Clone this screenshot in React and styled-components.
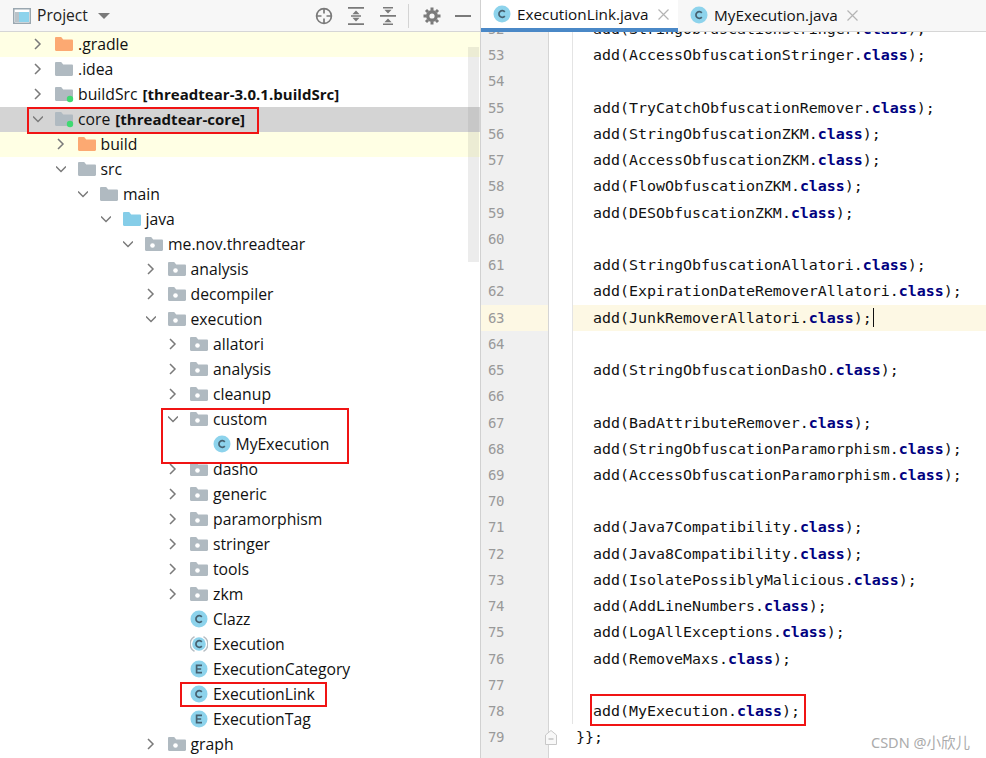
import React from 'react'
import styled, { createGlobalStyle } from 'styled-components'

const Global = createGlobalStyle`
  html, body { margin: 0; padding: 0; background: #fff; }
  #root { width: 986px; height: 758px; overflow: hidden; }
`

const Page = styled.div`
  position: relative;
  width: 986px;
  height: 758px;
  overflow: hidden;
  display: grid;
  grid-template-columns: 481px 505px;
  font-family: "Open Sans", "Noto Sans", sans-serif;
  color: #111;
`

const Side = styled.div`
  position: relative;
  height: 758px;
  overflow: hidden;
  border-right: 1px solid #d1d1d1;
  box-sizing: border-box;
`

const Header = styled.div`
  height: 32px;
  box-sizing: border-box;
  display: flex;
  align-items: center;
  padding-left: 13px;
  background: #f7f7f7;
  border-bottom: 1px solid #d6d6d6;
`

const Title = styled.span`
  font-size: 15.6px;
  margin-left: 6px;
  margin-bottom: 1px;
  color: #222;
`

const Caret = styled.span`
  width: 0;
  height: 0;
  margin-left: 10px;
  border-left: 6px solid transparent;
  border-right: 6px solid transparent;
  border-top: 6px solid #7a7a7a;
`

const Tools = styled.div`
  margin-left: auto;
  display: flex;
  align-items: center;
  height: 100%;
  padding-right: 4px;
`

const ToolButton = styled.span`
  display: flex;
  width: ${p => p.$w || 32}px;
  justify-content: center;
  color: #7a7a7a;
`

const ToolDivider = styled.span`
  width: 1px;
  height: 24px;
  background: #d4d4d4;
  margin: 0 5px 0 4px;
`

const Row = styled.div`
  height: 25px;
  display: flex;
  align-items: center;
  box-sizing: border-box;
  white-space: nowrap;
  font-size: 15.75px;
  padding-bottom: 2px;
  padding-left: ${p => 33 + p.$depth * 22.5}px;
  background: ${p => (p.$selected ? '#d4d4d4' : p.$ignored ? '#ffffe4' : 'transparent')};
`

const Chevron = styled.span`
  width: 22px;
  display: flex;
  flex: none;
  align-items: center;
`

const IconSlot = styled.span`
  width: 23px;
  display: flex;
  flex: none;
  align-items: center;
`

const Bold = styled.b`
  font-weight: 700;
  font-size: 15px;
  letter-spacing: 0.03px;
  margin-left: 5px;
`

const Scroll = styled.div`
  position: absolute;
  top: 47px;
  right: 1px;
  width: 11px;
  height: 215px;
  background: rgba(120, 120, 120, 0.14);
`

const Editor = styled.div`
  height: 758px;
  overflow: hidden;
  background: #fff;
`

const Tabs = styled.div`
  height: 32px;
  box-sizing: border-box;
  display: flex;
  background: #f7f7f7;
  border-bottom: 1px solid #d6d6d6;
`

const Tab = styled.div`
  width: ${p => p.$w}px;
  height: 32px;
  flex: none;
  box-sizing: border-box;
  display: flex;
  align-items: center;
  padding: 0 0 ${p => (p.$active ? 0 : 2)}px 12px;
  font-size: 15.3px;
  color: #111;
  background: ${p => (p.$active ? '#fff' : 'transparent')};
  border-bottom: ${p => (p.$active ? '4px solid #4a88c7' : 'none')};
`

const TabName = styled.span`
  margin-left: 6px;
`

const TabClose = styled.span`
  display: flex;
  margin-left: 9px;
`

const Viewport = styled.div`
  height: 726px;
  overflow: hidden;
`

const Lines = styled.div`
  margin-top: -16px;
`

const Line = styled.div`
  height: 26.24px;
  display: grid;
  grid-template-columns: 68px 23px 1fr;
  font-family: "DejaVu Sans Mono", "Liberation Mono", monospace;
  font-size: 14.95px;
  line-height: 26.24px;
`

const Num = styled.div`
  background: ${p => (p.$current ? '#fdf8e4' : '#f0f0f0')};
  border-right: 1px solid #d5d5d5;
  color: #999;
  font-size: 14px;
  padding-left: 7px;
  letter-spacing: -0.5px;
`

const Fold = styled.div`
  display: flex;
  align-items: center;
  margin-left: -4px;
`

const OuterBrace = styled.div`
  padding-left: 6px;
  color: #111;
`

const Code = styled.div`
  white-space: pre;
  color: #111;
  padding-left: ${p => (p.$closing ? 3 : 20)}px;
  border-left: 1px solid ${p => (p.$closing ? 'transparent' : '#e4e4e4')};
  background: ${p => (p.$current ? '#fdf8e4' : 'transparent')};
`

const Keyword = styled.b`
  color: #000080;
  font-weight: 700;
`

const TextCaret = styled.span`
  display: inline-block;
  width: 1.5px;
  height: 19px;
  margin-left: 1px;
  background: #111;
  vertical-align: -4px;
`

const Mark = styled.div`
  position: absolute;
  left: ${p => p.$x}px;
  top: ${p => p.$y}px;
  width: ${p => p.$w}px;
  height: ${p => p.$h}px;
  box-sizing: border-box;
  border: 2px solid #f01414;
`

const Watermark = styled.div`
  position: absolute;
  left: 871px;
  top: 731px;
  font-family: "Noto Sans", "Noto Sans CJK SC", sans-serif;
  font-size: 14.5px;
  color: #ababab;
  white-space: nowrap;
`

const Chev = ({ open }) => (
  <svg width="10" height="12" viewBox="0 0 10 12" fill="none" stroke="#7a7a7a" strokeWidth="1.5">
    {open ? <path d="M0 3.5l5 5 5-5" /> : <path d="M2 1l5 5-5 5" />}
  </svg>
)

const FOLDER = 'M0 1.2C0 .5.5 0 1.2 0h5l2 2.4h8.6c.7 0 1.2.5 1.2 1.2v9.2c0 .7-.5 1.2-1.2 1.2H1.2C.5 14 0 13.5 0 12.8z'

const Folder = ({ kind }) => {
  const fill = kind === 'orange' ? '#fca972' : kind === 'blue' ? '#85cde8' : '#b0bac1'
  return (
    <svg width="20" height="18" viewBox="0 0 20 18">
      <path d={FOLDER} transform="translate(0 2)" fill={fill} />
      {kind === 'package' && <circle cx="7.5" cy="10.5" r="2.3" fill="#fff" />}
      {kind === 'module' && <circle cx="15" cy="14" r="3.2" fill="#3fd971" />}
    </svg>
  )
}

const ClassIcon = ({ letter = 'C', abstract, size = 18 }) => (
  <svg width={size} height={size} viewBox="0 0 18 18">
    {abstract && <path d="M4.500 1.700A8.300 8.300 0 0 0 4.500 16.300M13.500 1.700A8.300 8.300 0 0 1 13.500 16.300" fill="none" stroke="#b5bcc2" strokeWidth="1.5" />}
    <circle cx="9" cy="9" r={abstract ? 6.8 : 8.5} fill="#8dd3ec" />
    {letter === 'C'
      ? <path d="M11.8 6.9A3.3 3.3 0 1 0 11.8 11.1" fill="none" stroke="#46606f" strokeWidth="1.7" />
      : <path d="M12 5.4H6.6v7.2H12M6.6 9h4.6" fill="none" stroke="#46606f" strokeWidth="1.7" />}
  </svg>
)

const tree = [
  { d: 0, name: '.gradle', kind: 'orange', ignored: true },
  { d: 0, name: '.idea', kind: 'plain' },
  { d: 0, name: 'buildSrc', bold: '[threadtear-3.0.1.buildSrc]', kind: 'module' },
  { d: 0, name: 'core', bold: '[threadtear-core]', kind: 'module', open: true, selected: true },
  { d: 1, name: 'build', kind: 'orange', ignored: true },
  { d: 1, name: 'src', kind: 'plain', open: true },
  { d: 2, name: 'main', kind: 'plain', open: true },
  { d: 3, name: 'java', kind: 'blue', open: true },
  { d: 4, name: 'me.nov.threadtear', kind: 'package', open: true },
  { d: 5, name: 'analysis', kind: 'package' },
  { d: 5, name: 'decompiler', kind: 'package' },
  { d: 5, name: 'execution', kind: 'package', open: true },
  { d: 6, name: 'allatori', kind: 'package' },
  { d: 6, name: 'analysis', kind: 'package' },
  { d: 6, name: 'cleanup', kind: 'package' },
  { d: 6, name: 'custom', kind: 'package', open: true },
  { d: 7, name: 'MyExecution', icon: 'C' },
  { d: 6, name: 'dasho', kind: 'package' },
  { d: 6, name: 'generic', kind: 'package' },
  { d: 6, name: 'paramorphism', kind: 'package' },
  { d: 6, name: 'stringer', kind: 'package' },
  { d: 6, name: 'tools', kind: 'package' },
  { d: 6, name: 'zkm', kind: 'package' },
  { d: 6, name: 'Clazz', icon: 'C' },
  { d: 6, name: 'Execution', icon: 'C', abstract: true },
  { d: 6, name: 'ExecutionCategory', icon: 'E' },
  { d: 6, name: 'ExecutionLink', icon: 'C' },
  { d: 6, name: 'ExecutionTag', icon: 'E' },
  { d: 5, name: 'graph', kind: 'package' },
]

const code = {
  52: 'StringObfuscationStringer', 53: 'AccessObfuscationStringer', 54: null,
  55: 'TryCatchObfuscationRemover', 56: 'StringObfuscationZKM', 57: 'AccessObfuscationZKM',
  58: 'FlowObfuscationZKM', 59: 'DESObfuscationZKM', 60: null,
  61: 'StringObfuscationAllatori', 62: 'ExpirationDateRemoverAllatori', 63: 'JunkRemoverAllatori', 64: null,
  65: 'StringObfuscationDashO', 66: null,
  67: 'BadAttributeRemover', 68: 'StringObfuscationParamorphism', 69: 'AccessObfuscationParamorphism', 70: null,
  71: 'Java7Compatibility', 72: 'Java8Compatibility', 73: 'IsolatePossiblyMalicious', 74: 'AddLineNumbers',
  75: 'LogAllExceptions', 76: 'RemoveMaxs', 77: null, 78: 'MyExecution',
}

const CloseX = () => (
  <svg width="11" height="11" viewBox="0 0 11 11" stroke="#b4b4b4" strokeWidth="1.2">
    <path d="M.5.5l10 10M10.500.5l-10 10" />
  </svg>
)

const App = () => (
  <Page>
    <Global />
    <Side>
      <Header>
        <svg width="18" height="16" viewBox="0 0 18 16">
          <rect x=".75" y=".75" width="16.5" height="14.5" fill="#fff" stroke="#9aa7b0" strokeWidth="1.5" />
          <rect x="2" y="4" width="14" height="10" fill="#8dd3ec" />
          <rect x="2" y="4" width="4" height="10" fill="#b9c3c9" />
        </svg>
        <Title>Project</Title>
        <Caret />
        <Tools>
          <ToolButton>
            <svg width="18" height="18" viewBox="0 0 18 18" fill="none" stroke="currentColor" strokeWidth="1.7">
              <circle cx="9" cy="9" r="7.4" />
              <path d="M9 1.5v5M9 11.5v5M1.5 9h5M11.5 9h5" />
            </svg>
          </ToolButton>
          <ToolButton>
            <svg width="16" height="18" viewBox="0 0 16 18" fill="currentColor">
              <path d="M0 0h16v1.7H0zM0 16.3h16V18H0zM8 3.4l3.6 3.8H4.400zM8 14.600l-3.600-3.800h7.200zM3 8.200h10v1.600H3z" />
            </svg>
          </ToolButton>
          <ToolButton>
            <svg width="16" height="18" viewBox="0 0 16 18" fill="currentColor">
              <path d="M0 8.100h16v1.700H0zM8 6.600L4.400 2.800h7.200zM8 11.400l3.600 3.800H4.400zM3 0h10v1.600H3zM3 16.400h10V18H3z" />
            </svg>
          </ToolButton>
          <ToolDivider />
          <ToolButton $w={36}>
            <svg width="18" height="18" viewBox="0 0 18 18" fill="none" stroke="currentColor">
              <circle cx="9" cy="9" r="4.300" strokeWidth="3.400" />
              <path strokeWidth="3" d="M9 .5v3M9 14.500v3M.5 9h3M14.500 9h3M3 3l2 2M13 13l2 2M15 3l-2 2M5 13l-2 2" />
            </svg>
          </ToolButton>
          <ToolButton $w={26}>
            <svg width="16" height="2" viewBox="0 0 16 2"><path d="M0 0h16v2H0z" fill="currentColor" /></svg>
          </ToolButton>
        </Tools>
      </Header>
      {tree.map((item, i) => {
        const isLeaf = Boolean(item.icon)
        return (
          <Row key={i} $depth={item.d} $ignored={item.ignored} $selected={item.selected}>
            <Chevron>{!isLeaf && <Chev open={item.open} />}</Chevron>
            <IconSlot>
              {isLeaf ? <ClassIcon letter={item.icon} abstract={item.abstract} /> : <Folder kind={item.kind} />}
            </IconSlot>
            {item.name}
            {item.bold && <Bold>{item.bold}</Bold>}
          </Row>
        )
      })}
      <Scroll />
    </Side>
    <Editor>
      <Tabs>
        <Tab $w={197} $active>
          <ClassIcon />
          <TabName>ExecutionLink.java</TabName>
          <TabClose><CloseX /></TabClose>
        </Tab>
        <Tab $w={200}>
          <ClassIcon />
          <TabName>MyExecution.java</TabName>
          <TabClose><CloseX /></TabClose>
        </Tab>
      </Tabs>
      <Viewport>
        <Lines>
          {Object.entries(code).map(([n, name]) => (
            <Line key={n}>
              <Num $current={n === '63'}>{n}</Num>
              <div />
              <Code $current={n === '63'}>
                {name && <>add({name}.<Keyword>class</Keyword>);</>}
                {n === '63' && <TextCaret />}
              </Code>
            </Line>
          ))}
          <Line>
            <Num>79</Num>
            <Fold>
              <svg width="12" height="15" viewBox="0 0 12 15">
                <path d="M6 .5l5.500 4.500v9.500H.5V5z" fill="#f8f8f8" stroke="#c8c8c8" />
                <path d="M3.500 9h5" stroke="#aaa" />
              </svg>
            </Fold>
            <Code $closing>{'}};'}</Code>
          </Line>
          <Line>
            <Num />
            <OuterBrace>{'}'}</OuterBrace>
            <Code $closing />
          </Line>
        </Lines>
      </Viewport>
    </Editor>
    <Mark $x={27} $y={107} $w={232} $h={27} />
    <Mark $x={161} $y={408} $w={188} $h={56} />
    <Mark $x={180} $y={682} $w={147} $h={25} />
    <Mark $x={590} $y={694} $w={216} $h={32} />
    <Watermark>CSDN @小欣儿</Watermark>
  </Page>
)

export default App
